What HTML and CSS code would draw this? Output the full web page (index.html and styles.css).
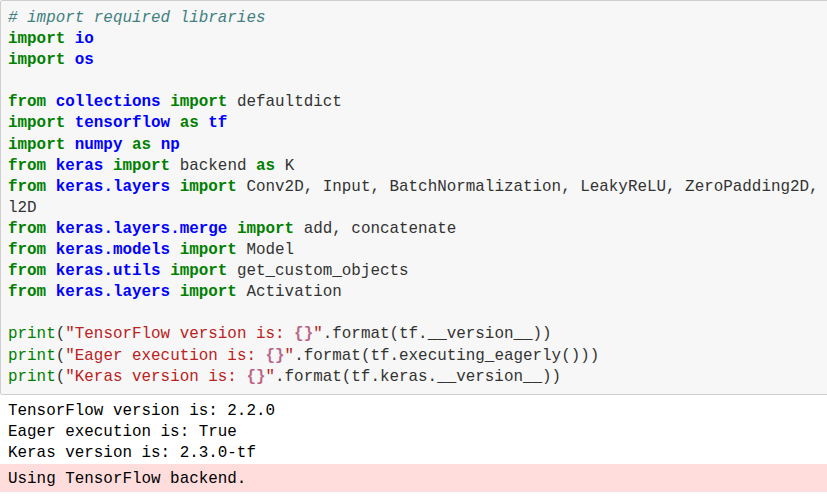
FILE: index.html
```html
<!DOCTYPE html>
<html>
<head>
<meta charset="utf-8">
<link rel="stylesheet" href="styles.css">
</head>
<body>
<div class="cell">
<div class="input"><pre class="code"><span class="c"># import required libraries</span>
<span class="k">import</span> <span class="n">io</span>
<span class="k">import</span> <span class="n">os</span>

<span class="k">from</span> <span class="n">collections</span> <span class="k">import</span> <span class="p">defaultdict</span>
<span class="k">import</span> <span class="n">tensorflow</span> <span class="k">as</span> <span class="n">tf</span>
<span class="k">import</span> <span class="n">numpy</span> <span class="k">as</span> <span class="n">np</span>
<span class="k">from</span> <span class="n">keras</span> <span class="k">import</span> <span class="p">backend</span> <span class="k">as</span> <span class="p">K</span>
<span class="k">from</span> <span class="n">keras.layers</span> <span class="k">import</span> <span class="p">Conv2D, Input, BatchNormalization, LeakyReLU, ZeroPadding2D,</span>
<span class="p">l2D</span>
<span class="k">from</span> <span class="n">keras.layers.merge</span> <span class="k">import</span> <span class="p">add, concatenate</span>
<span class="k">from</span> <span class="n">keras.models</span> <span class="k">import</span> <span class="p">Model</span>
<span class="k">from</span> <span class="n">keras.utils</span> <span class="k">import</span> <span class="p">get_custom_objects</span>
<span class="k">from</span> <span class="n">keras.layers</span> <span class="k">import</span> <span class="p">Activation</span>

<span class="b">print</span><span class="p">(</span><span class="s">"TensorFlow version is: <span class="si">{}</span>"</span><span class="p">.format(tf.__version__))</span>
<span class="b">print</span><span class="p">(</span><span class="s">"Eager execution is: <span class="si">{}</span>"</span><span class="p">.format(tf.executing_eagerly()))</span>
<span class="b">print</span><span class="p">(</span><span class="s">"Keras version is: <span class="si">{}</span>"</span><span class="p">.format(tf.keras.__version__))</span></pre></div>
<div class="output">
<pre class="stdout">TensorFlow version is: 2.2.0
Eager execution is: True
Keras version is: 2.3.0-tf</pre>
<pre class="stderr">Using TensorFlow backend.</pre>
</div>
</div>
</body>
</html>
```
FILE: styles.css
```css
html, body {
  margin: 0;
  padding: 0;
  background: #fff;
  overflow: hidden;
}
.cell {
  width: 860px;
}
pre {
  margin: 0;
  font-family: "Liberation Mono", "DejaVu Sans Mono", monospace;
  font-size: 15.9px;
  line-height: 21.1px;
  white-space: pre;
}
.input {
  background: #f7f7f7;
  border: 1px solid #cfcfcf;
  border-radius: 2px;
  padding: 7px 7px 6px 7px;
}
.code {
  color: #333;
}
.p { color: #333; }
.c { color: #408080; font-style: italic; }
.k { color: #008000; font-weight: bold; }
.n { color: #0000ff; font-weight: bold; }
.b { color: #008000; }
.s { color: #ba2121; }
.si { color: #bb6688; font-weight: bold; }
.output {
  padding-top: 6.5px;
}
.stdout {
  color: #000;
  padding: 0 8px;
}
.stderr {
  color: #000;
  background: #fdd;
  padding: 5px 8px 0 8px;
  height: 23px;
}
```
